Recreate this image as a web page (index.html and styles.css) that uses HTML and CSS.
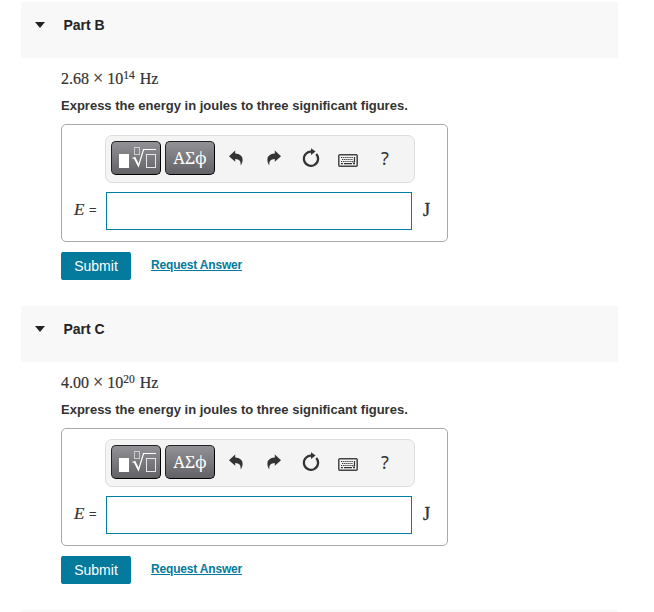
FILE: index.html
```html
<!DOCTYPE html>
<html lang="en">
<head>
    <meta charset="UTF-8">
    <meta name="viewport" content="width=device-width, initial-scale=1.0">
    <title>Photon Energy</title>
    <link rel="stylesheet" href="styles.css">
</head>
<body>
    <!-- Shared icons -->
    <svg class="sprite" width="0" height="0">
        <symbol id="root" viewBox="0 0 50 34">
            <rect x="8" y="13" width="10" height="14" fill="#fff"/>
            <rect x="23.500" y="6.500" width="5" height="7" fill="none" stroke="#ccc"/>
            <path d="M21.500 17.500l2-1 4 8.500 5-16.500h12.500" fill="none" stroke="#fff" stroke-width="1.200"/>
            <path d="M23.500 16.500l3.800 7.500" stroke="#fff" stroke-width="1.700"/>
            <rect x="35.500" y="13.500" width="9" height="13" fill="none" stroke="#e8e8e8"/>
        </symbol>
        <symbol id="undo" viewBox="0 0 14 16">
            <path d="M0 6.200L6.200.500V3.600C11 3.800 13.600 6.300 13.600 10c0 2.300-.8 4-2 5.400.6-4-1.200-6.200-5.400-6.300v2.700z" fill="#333"/>
        </symbol>
        <symbol id="reset" viewBox="0 0 18 20">
            <path d="M10 3.700A7.100 7.100 0 1 0 14.200 5.900" fill="none" stroke="#333" stroke-width="2.200"/>
            <path d="M9 .300l4.600 3.200L9 7z" fill="#333"/>
        </symbol>
        <symbol id="keyboard" viewBox="0 0 20 13">
            <rect x=".8" y=".8" width="18.400" height="11.400" rx="1" fill="#f4f4f4" stroke="#444" stroke-width="1.500"/>
            <path d="M3 3.500h12M4 5.500h11M3 7.500h12" stroke="#333" stroke-width="1.200" stroke-dasharray="1.300 .8"/>
            <path d="M16.500 3v5h-2M3 9.700h2M6 9.700h8M15 9.700h2" fill="none" stroke="#333" stroke-width="1.200"/>
        </symbol>
    </svg>

    <div class="container">
        <section class="part">
            <div class="part-header">
                <span class="arrow"></span>
                <h2>Part B</h2>
            </div>
            <div class="part-body">
                <div class="value">2.68 <span class="times">×</span> 10<sup>14</sup> <span class="hz">Hz</span></div>
                <div class="instructions">Express the energy in joules to three significant figures.</div>
                <div class="answer-box">
                    <div class="toolbar">
                        <button class="tool-dark"><svg width="50" height="34"><use href="#root"/></svg></button>
                        <button class="tool-dark greek">ΑΣϕ</button>
                        <button class="tool"><svg width="14" height="16"><use href="#undo"/></svg></button>
                        <button class="tool redo"><svg width="14" height="16"><use href="#undo"/></svg></button>
                        <button class="tool reset"><svg width="18" height="20"><use href="#reset"/></svg></button>
                        <button class="tool keyboard"><svg width="20" height="13"><use href="#keyboard"/></svg></button>
                        <button class="tool help">?</button>
                    </div>
                    <div class="answer-row">
                        <label for="energyB"><i>E</i><span class="equals">=</span></label>
                        <input type="text" id="energyB">
                        <span class="unit">J</span>
                    </div>
                </div>
                <div class="actions">
                    <button class="submit">Submit</button>
                    <a class="request" href="#">Request Answer</a>
                </div>
            </div>
        </section>

        <section class="part">
            <div class="part-header">
                <span class="arrow"></span>
                <h2>Part C</h2>
            </div>
            <div class="part-body">
                <div class="value">4.00 <span class="times">×</span> 10<sup>20</sup> <span class="hz">Hz</span></div>
                <div class="instructions">Express the energy in joules to three significant figures.</div>
                <div class="answer-box">
                    <div class="toolbar">
                        <button class="tool-dark"><svg width="50" height="34"><use href="#root"/></svg></button>
                        <button class="tool-dark greek">ΑΣϕ</button>
                        <button class="tool"><svg width="14" height="16"><use href="#undo"/></svg></button>
                        <button class="tool redo"><svg width="14" height="16"><use href="#undo"/></svg></button>
                        <button class="tool reset"><svg width="18" height="20"><use href="#reset"/></svg></button>
                        <button class="tool keyboard"><svg width="20" height="13"><use href="#keyboard"/></svg></button>
                        <button class="tool help">?</button>
                    </div>
                    <div class="answer-row">
                        <label for="energyC"><i>E</i><span class="equals">=</span></label>
                        <input type="text" id="energyC">
                        <span class="unit">J</span>
                    </div>
                </div>
                <div class="actions">
                    <button class="submit">Submit</button>
                    <a class="request" href="#">Request Answer</a>
                </div>
            </div>
        </section>
        <div class="part-end"></div>
    </div>
</body>
</html>
```
FILE: styles.css
```css
* {
    box-sizing: border-box;
}
body {
    margin: 0;
    background: #fff;
    color: #333;
    font-family: "Liberation Sans", Arial, sans-serif;
}
.sprite {
    display: none;
}
.container {
    width: 597px;
    margin-left: 21px;
    padding-top: 2px;
}
.part {
    height: 304px;
}
.part-header {
    display: flex;
    height: 56px;
    padding: 14px 0 0 14px;
    background: #f8f8f8;
}
.arrow {
    width: 0;
    height: 0;
    margin: 6px 17.5px 0 0;
    border-left: 5.5px solid transparent;
    border-right: 5.5px solid transparent;
    border-top: 6px solid #222;
}
.part-header h2 {
    margin: 0 0 0 1px;
    font-size: 14px;
    line-height: 18px;
    color: #222;
}
.part-body {
    padding: 11px 0 0 40px;
}
.value {
    height: 20px;
    font-family: "Liberation Serif", "Times New Roman", serif;
    font-size: 16px;
    line-height: 20px;
    white-space: nowrap;
    -webkit-text-stroke: 0.2px #333;
}
.value .times {
    font-size: 18px;
    line-height: 0;
}
.value .hz {
    margin-left: 1px;
}
.value sup {
    font-size: 11.5px;
    line-height: 0;
    vertical-align: 5px;
}
.instructions {
    height: 35px;
    padding-top: 8px;
    font-size: 13px;
    font-weight: bold;
    line-height: 17px;
    white-space: nowrap;
}
.answer-box {
    width: 387px;
    height: 118px;
    padding: 10px 0 0 11px;
    border: 1px solid #aaa;
    border-radius: 5px;
}
.toolbar {
    display: flex;
    align-items: center;
    width: 310px;
    height: 48px;
    margin-left: 32px;
    padding: 0 5px;
    background: #f4f4f4;
    border: 1px solid #ddd;
    border-radius: 7px;
}
.toolbar button {
    display: flex;
    align-items: center;
    justify-content: center;
    padding: 0;
    background: none;
    border: none;
    color: #333;
}
.toolbar .tool-dark {
    width: 50px;
    height: 34px;
    margin: 0 4px 2px 0;
    background: linear-gradient(#929296, #626266);
    border: 1px solid #222;
    border-right-color: #000;
    border-bottom-color: #000;
    border-radius: 5px;
    color: #fff;
}
.tool-dark svg {
    flex: none;
}
.toolbar .greek {
    padding-bottom: 2px;
    font-family: "Noto Serif", "DejaVu Serif", serif;
    font-size: 16.5px;
}
.toolbar .tool {
    width: 14px;
    height: 34px;
    margin: 0 24px 2px 10px;
}
.toolbar .redo {
    margin: 0 21px 2px 0;
    transform: scaleX(-1);
}
.toolbar .reset {
    width: 18px;
    margin: 0 18px 2px 0;
}
.toolbar .keyboard {
    width: 20px;
    margin: 3px 20px 0 0;
}
.toolbar .help {
    margin: 0 0 3px;
    font-family: "Noto Sans", sans-serif;
    font-size: 18px;
}
.answer-row {
    display: flex;
    align-items: center;
    margin-top: 9px;
}
.answer-row label {
    display: flex;
    align-items: center;
    width: 33px;
    padding: 0 0 2px 1px;
    line-height: 20px;
}
.answer-row i {
    font-family: "Liberation Serif", serif;
    font-size: 17px;
    -webkit-text-stroke: 0.2px #333;
}
.equals {
    margin-left: 4.5px;
    font-size: 13px;
}
.answer-row input {
    width: 306px;
    height: 38px;
    padding: 0 6px;
    border: 1px solid #007fa3;
    font-size: 16px;
}
.unit {
    margin-left: 11px;
    padding-bottom: 2px;
    font-family: "Liberation Serif", serif;
    font-size: 18px;
    -webkit-text-stroke: 0.4px #333;
}
.actions {
    display: flex;
    margin-top: 10px;
}
.submit {
    width: 70px;
    height: 28px;
    padding: 0;
    background: #047a9c;
    border: none;
    border-radius: 2px;
    color: #fff;
    font-family: inherit;
    font-size: 14px;
}
.request {
    margin: 5px 0 0 20px;
    color: #047a9c;
    font-size: 12px;
    font-weight: bold;
    line-height: 16px;
    letter-spacing: -0.18px;
}
.part-end {
    height: 2px;
    background: #f8f8f8;
}
```
